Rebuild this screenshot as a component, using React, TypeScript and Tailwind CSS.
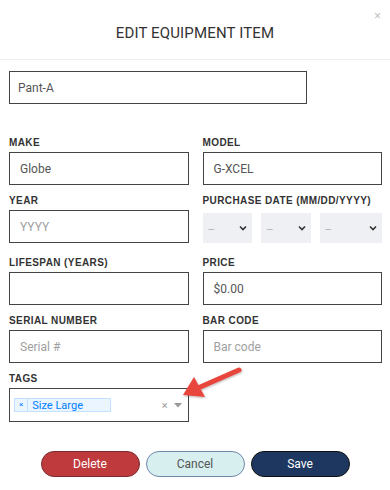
import React from "react";

function Label({ children }: { children: React.ReactNode }) {
  return (
    <div className="h-[18px] text-[10px] font-bold uppercase tracking-[0.04em] text-[#333] leading-[18px]">
      {children}
    </div>
  );
}

function TextBox({ value, placeholder }: { value?: string; placeholder?: string }) {
  return (
    <div className="flex h-[33px] items-center border border-[#444] px-[10px] text-[12px] font-['Roboto',sans-serif]">
      {value ? (
        <span className="text-[#555]">{value}</span>
      ) : (
        <span className="text-[#a0a0a0]">{placeholder}</span>
      )}
    </div>
  );
}

function DateSelect({ wide }: { wide?: boolean }) {
  return (
    <div
      className={`flex h-[30px] items-center justify-between bg-[#eef0f3] pl-[6px] pr-[5px] ${
        wide ? "w-[63px]" : "w-[50px]"
      }`}
    >
      <span className="text-[10px] text-[#aaa]">–</span>
      <svg width="8" height="6" viewBox="0 0 8 6">
        <path d="M1 1.5 L4 4.5 L7 1.5" stroke="#333" strokeWidth="1.6" fill="none" />
      </svg>
    </div>
  );
}

export default function App() {
  return (
    <div className="relative h-[490px] w-[390px] overflow-hidden bg-white font-['Liberation_Sans',Arial,sans-serif]">
      <div className="absolute right-[9px] top-[10px] text-[12px] leading-none text-[#bbb]">×</div>
      <div className="flex h-[60px] items-center justify-center border-b border-[#eee] pt-[8px]">
        <h1 className="font-['Roboto',sans-serif] text-[15px] font-normal tracking-[0.01em] text-[#333]">
          EDIT EQUIPMENT ITEM
        </h1>
      </div>

      <div className="pl-[9px] pr-[8px] pt-[11px]">
        <div className="w-[298px]">
          <div className="flex h-[33px] items-center border border-[#444] px-[8px] font-['Roboto',sans-serif] text-[12px] text-[#555]">
            Pant-A
          </div>
        </div>

        <div className="mt-[30px] grid grid-cols-2 gap-x-[14px] gap-y-[7px]">
          <div>
            <Label>Make</Label>
            <TextBox value="Globe" />
          </div>
          <div>
            <Label>Model</Label>
            <TextBox value="G-XCEL" />
          </div>
          <div className="pb-[4px]">
            <Label>Year</Label>
            <TextBox placeholder="YYYY" />
          </div>
          <div className="pb-[4px]">
            <Label>Purchase Date (MM/DD/YYYY)</Label>
            <div className="mt-[3px] flex gap-[9px]">
              <DateSelect />
              <DateSelect />
              <DateSelect wide />
            </div>
          </div>
          <div>
            <Label>Lifespan (Years)</Label>
            <TextBox placeholder="" />
          </div>
          <div>
            <Label>Price</Label>
            <TextBox value="$0.00" />
          </div>
          <div>
            <Label>Serial Number</Label>
            <TextBox placeholder="Serial #" />
          </div>
          <div>
            <Label>Bar Code</Label>
            <TextBox placeholder="Bar code" />
          </div>
          <div>
            <Label>Tags</Label>
            <div className="flex h-[34px] items-center border border-[#444] pl-[4px] pr-[6px] font-['Roboto',sans-serif]">
              <div className="flex h-[14px] w-[97px] items-stretch border border-[#c2e0ff] bg-[#ebf5ff] text-[#007eff]">
                <span className="flex items-center border-r border-[#c2e0ff] px-[4px] text-[8px] leading-none">×</span>
                <span className="flex items-center px-[4px] text-[11px] leading-none">Size Large</span>
              </div>
              <div className="ml-auto flex items-center gap-[6px]">
                <span className="text-[11px] leading-none text-[#999]">×</span>
                <svg width="8" height="5" viewBox="0 0 8 5">
                  <path d="M0 0 L8 0 L4 4.5 Z" fill="#999" />
                </svg>
              </div>
            </div>
          </div>
        </div>

        <div className="mt-[29px] flex justify-center gap-[6px] pr-[1px] font-['Roboto',sans-serif] text-[12px]">
          <button className="h-[26px] w-[99px] rounded-full border border-[#7a2a2c] bg-[#bf3a3c] text-white">
            Delete
          </button>
          <button className="h-[26px] w-[99px] rounded-full border border-[#6f88a8] bg-[#d7efef] text-[#555]">
            Cancel
          </button>
          <button className="h-[26px] w-[99px] rounded-full border border-[#111] bg-[#1d3761] text-white">
            Save
          </button>
        </div>
      </div>

      <svg
        className="pointer-events-none absolute left-[176px] top-[362px]"
        width="72"
        height="42"
        viewBox="0 0 72 42"
      >
        <defs>
          <filter id="sh" x="-20%" y="-20%" width="140%" height="140%">
            <feDropShadow dx="0.5" dy="1" stdDeviation="0.8" floodColor="#000" floodOpacity="0.3" />
          </filter>
        </defs>
        <g filter="url(#sh)">
          <path d="M63 8 L22 26" stroke="#e8453c" strokeWidth="5" strokeLinecap="round" />
          <path d="M7 33 L18 15 L29 35 Z" fill="#e8453c" />
        </g>
      </svg>
    </div>
  );
}
